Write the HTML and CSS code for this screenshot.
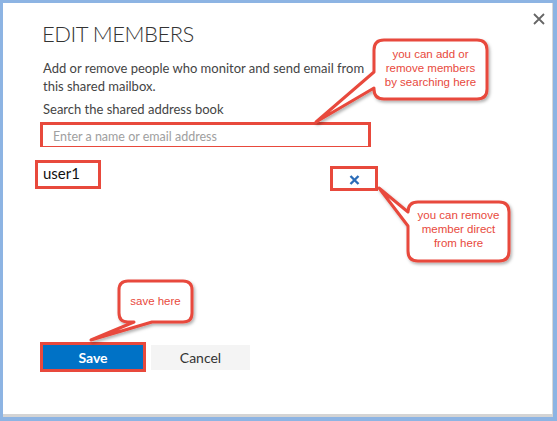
FILE: index.html
```html
<!DOCTYPE html>
<html lang="en">

<head>
    <meta charset="UTF-8">
    <meta name="viewport" content="width=device-width, initial-scale=1.0">
    <title>Edit Members</title>
    <link rel="stylesheet" href="styles.css">
</head>

<body>
    <div class="dialog">
        <button class="close-btn" aria-label="Close">
            <svg width="12" height="12" viewBox="0 0 12 12">
                <path d="M1 1 L11 11 M11 1 L1 11" stroke="#666" stroke-width="1.8" fill="none" />
            </svg>
        </button>

        <h1 class="title">EDIT MEMBERS</h1>
        <p class="desc">Add or remove people who monitor and send email from this shared mailbox.</p>
        <div class="label">Search the shared address book</div>
        <div class="search-box">
            <input type="text" placeholder="Enter a name or email address">
        </div>

        <div class="member-row">
            <div class="member-name">user1</div>
            <div class="remove-box">
                <svg width="11" height="10" viewBox="0 0 11 10">
                    <path d="M1.5 1 L9.5 9 M9.5 1 L1.5 9" stroke="#2b6cb8" stroke-width="2.4" fill="none" />
                </svg>
            </div>
        </div>

        <div class="actions">
            <button class="btn-save">Save</button>
            <button class="btn-cancel">Cancel</button>
        </div>
    </div>

    <!-- annotation callouts -->
    <svg class="callouts" width="557" height="421" viewBox="0 0 557 421">
        <defs>
            <filter id="shadow" x="-20%" y="-20%" width="140%" height="140%">
                <feDropShadow dx="1.5" dy="2" stdDeviation="1.5" flood-color="#000" flood-opacity="0.3" />
            </filter>
        </defs>
        <g fill="#fff" stroke="#e8493c" stroke-width="3" stroke-linejoin="round" filter="url(#shadow)">
            <path d="M384 40 H477 Q487 40 487 50 V89 Q487 99 477 99 H384 Q374 99 374 89 V88 L316 122 L374 72 V50 Q374 40 384 40 Z" />
            <path d="M418 202 H499 Q509 202 509 212 V251 Q509 261 499 261 H418 Q408 261 408 251 V226 L379 188 L408 212 Q408 202 418 202 Z" />
            <path d="M128 281 H183 Q192 281 192 290 V313 Q192 322 183 322 H152 L91 340 L134 322 H128 Q119 322 119 313 V290 Q119 281 128 281 Z" />
        </g>
    </svg>
    <div class="note note-search">you can add or<br>remove members<br>by searching here</div>
    <div class="note note-remove">you can remove<br>member direct<br>from here</div>
    <div class="note note-save">save here</div>
</body>

</html>
```

FILE: styles.css
```css
body {
    margin: 0;
    width: 557px;
    height: 421px;
    background-color: #8db4e3;
    font-family: Lato, "Open Sans", sans-serif;
    position: relative;
    overflow: hidden;
}

.dialog {
    position: relative;
    box-sizing: border-box;
    margin: 3px 0 0 3px;
    width: 550px;
    height: 414px;
    background-color: #fff;
    border-right: 1px solid #d8d8d8;
    border-bottom: 3px solid #d4d4d4;
    padding: 16px 0 0 37px;
}

.close-btn {
    position: absolute;
    top: 10px;
    right: 7px;
    border: none;
    background: none;
    padding: 0;
    cursor: pointer;
}

.title {
    margin: 0 0 0 2px;
    font-size: 22px;
    font-weight: 300;
    line-height: 30px;
    letter-spacing: -0.5px;
    color: #333;
}

.desc {
    margin: 10px 0 0 3px;
    width: 335px;
    font-size: 13px;
    line-height: 18px;
    color: #444;
}

.label {
    margin: 5px 0 0 3px;
    font-size: 13px;
    line-height: 18px;
    color: #444;
}

.search-box {
    margin-top: 4px;
    width: 331px;
    height: 25px;
    box-sizing: border-box;
    border: 3px solid #e8493c;
}

.search-box input {
    width: 100%;
    height: 100%;
    box-sizing: border-box;
    border: none;
    outline: none;
    padding: 0 0 0 10px;
    font-family: inherit;
    font-size: 12.5px;
    color: #333;
}

.search-box input::placeholder {
    color: #a0a0a0;
}

.member-row {
    display: flex;
    align-items: flex-start;
    margin: 13px 0 0 -5px;
}

.member-name {
    box-sizing: border-box;
    width: 66px;
    height: 29px;
    border: 3px solid #e8493c;
    padding-left: 5px;
    font-size: 15px;
    line-height: 21px;
    color: #111;
}

.remove-box {
    box-sizing: border-box;
    width: 48px;
    height: 25px;
    margin: 6px 0 0 229px;
    border: 3px solid #e8493c;
    display: flex;
    align-items: center;
    justify-content: center;
    padding-top: 2px;
}

.actions {
    display: flex;
    align-items: center;
    gap: 5px;
    margin-top: 151px;
}

.btn-save {
    box-sizing: border-box;
    width: 106px;
    height: 30px;
    border: 3px solid #e8493c;
    background-color: #0072c6;
    color: #fff;
    font-family: inherit;
    font-size: 14px;
    font-weight: 700;
    cursor: pointer;
}

.btn-cancel {
    box-sizing: border-box;
    width: 99px;
    height: 25px;
    border: none;
    background-color: #f4f4f4;
    color: #333;
    font-family: inherit;
    font-size: 14px;
    cursor: pointer;
}

.callouts {
    position: absolute;
    left: 0;
    top: 0;
}

.note {
    position: absolute;
    font-family: "Liberation Sans", Arial, sans-serif;
    font-size: 11.5px;
    line-height: 14px;
    color: #e8493c;
    text-align: center;
}

.note-search {
    left: 374px;
    width: 113px;
    top: 47px;
}

.note-remove {
    left: 408px;
    width: 101px;
    top: 208px;
}

.note-save {
    left: 119px;
    width: 73px;
    top: 294px;
}
```
